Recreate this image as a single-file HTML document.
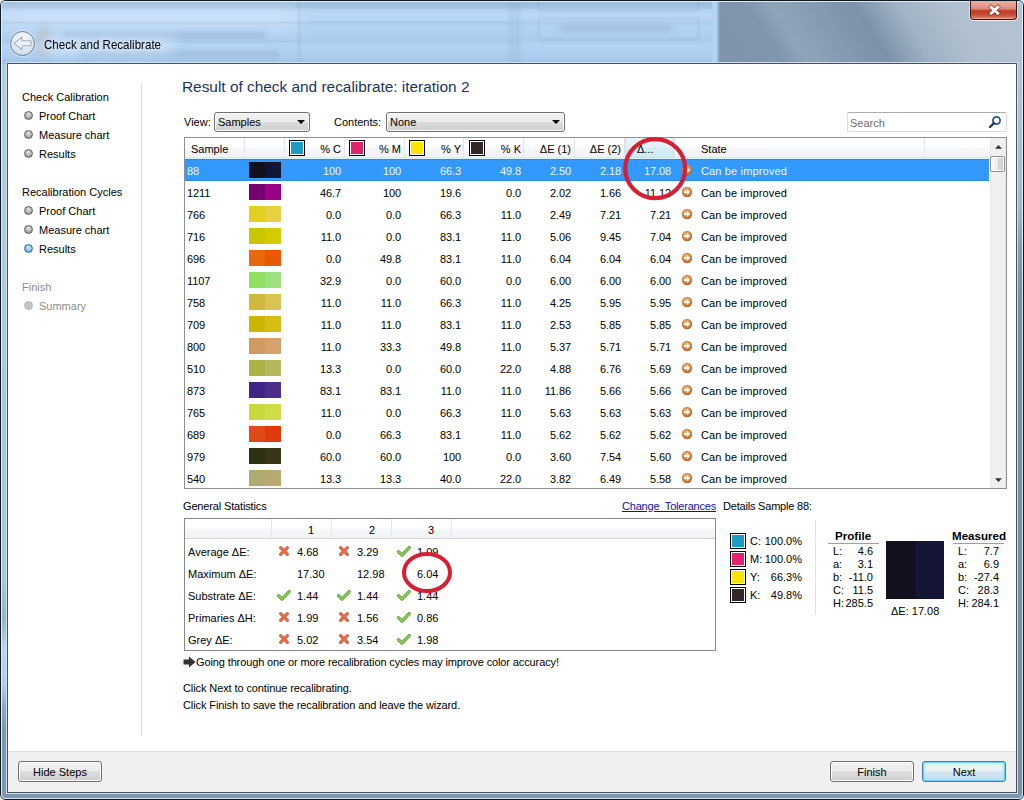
<!DOCTYPE html>
<html><head><meta charset="utf-8"><style>
*{box-sizing:border-box;margin:0;padding:0}
html,body{width:1024px;height:800px;overflow:hidden;background:#e6e6e6}
body{position:relative;font-family:"Liberation Sans",sans-serif;font-size:11px;color:#000}
.a{position:absolute}
.t{position:absolute;white-space:pre;line-height:13px}
.r{position:absolute;white-space:pre;line-height:13px;text-align:right}
.btn{position:absolute;height:21px;border:1px solid #707070;border-radius:3px;
 background:linear-gradient(#f2f2f2 0%,#ebebeb 50%,#dddddd 50%,#cfcfcf 100%);text-align:center;line-height:20px;font-size:11px;box-shadow:inset 0 0 0 1px #fcfcfc}
.btn.def{border-color:#3c7fb1;background:linear-gradient(#f0f4f8 0%,#eaf0f5 50%,#d6e6f1 50%,#c8def0 100%);box-shadow:inset 0 0 0 1px #6cd4fa, inset 0 0 3px 1px rgba(120,215,250,.7)}
.bul{position:absolute;width:9px;height:9px;border-radius:50%;background:radial-gradient(circle at 50% 32%,#e6e6e6 0,#b0b0b0 55%,#808080 100%);border:1px solid #606060}
.side{font-size:11px;line-height:13px}
.cmb{position:absolute;height:20px;border:1px solid #707070;border-radius:3px;background:linear-gradient(#f2f2f2 0%,#ebebeb 50%,#dddddd 50%,#cfcfcf 100%);box-shadow:inset 0 0 0 1px #fbfbfb}
.cmb span{position:absolute;left:3px;top:3px;font-size:11px;line-height:13px}
.cmb i{position:absolute;top:7px;width:0;height:0;border-left:4px solid transparent;border-right:4px solid transparent;border-top:4px solid #000}
.hsep{position:absolute;top:138px;width:1px;height:20px;background:#e3e5e7}
.hsw{position:absolute;top:140px;width:16px;height:16px;border:1px solid #000;box-shadow:inset 0 0 0 1px #fff}
.row{position:absolute;left:185px;width:804px;height:22px}
.sw{position:absolute;top:3px;left:64px;width:32px;height:16px}
.sw b{position:absolute;top:0;height:16px;width:16px}
.cell{position:absolute;top:6px;white-space:pre;line-height:13px;text-align:right;font-size:11px;letter-spacing:-0.1px}
.ico{position:absolute;left:497px;top:6px;width:11px;height:11px;border-radius:50%;background:radial-gradient(circle at 50% 45%,#f0b070 0,#d8904c 55%,#a86428 100%)}
.ico:after{content:"";position:absolute;left:2px;top:3px;width:0;height:0}
.st{position:absolute;left:516px;top:6px;white-space:pre;line-height:13px;font-size:11px;letter-spacing:0.15px}
.sel{background:#3399ff;color:#eef7ff;box-shadow:inset 0 1px 0 #2f8ae6,inset 0 -1px 0 #2f8ae6,0 -1px 0 #dcf4ff}
.xi{position:absolute;width:11px;height:11px}
.csw{position:absolute;width:16px;height:16px;border:1px solid #000;box-shadow:inset 0 0 0 1px #fff}
</style></head><body>
<div class="a" style="left:0;top:0;width:1024px;height:800px;border:1px solid #0e1820;border-radius:6px;overflow:hidden;background:#aec8e4"><div class="a" style="left:0;top:0;width:716px;height:63px;background:#b3d3f4"></div><div class="a" style="left:0;top:0;width:713px;height:63px;background:linear-gradient(180deg,rgba(80,110,140,.22) 0px,rgba(80,110,140,.18) 6px,rgba(255,255,255,.05) 10px,rgba(255,255,255,.08) 18px,rgba(60,100,140,.06) 22px,rgba(255,255,255,.0) 26px,rgba(60,100,140,.06) 40px,rgba(255,255,255,0) 44px,rgba(60,100,140,.05) 57px,rgba(40,80,120,.12) 61px)"></div><div class="a" style="left:716px;top:0;width:306px;height:63px;background:linear-gradient(58deg,#7f93ab 0px,#7f94ab 20px,#8096ad 57px,#8fa4b9 78px,#8599b0 116px,#7c92a9 148px,#a0b2c4 184px,#b0c0cf 226px,#b4c3d2 296px)"></div><div class="a" style="left:711px;top:0;width:8px;height:63px;background:linear-gradient(90deg,rgba(179,211,244,1) 0,rgba(179,211,244,.8) 60%,rgba(179,211,244,0) 100%)"></div><div class="a" style="left:0;top:6px;width:300px;height:22px;background:rgba(235,245,255,.35);filter:blur(8px)"></div><div class="a" style="left:297px;top:0;width:2px;height:63px;background:rgba(110,140,175,.16);filter:blur(1px)"></div><div class="a" style="left:0;top:21px;width:508px;height:1px;background:rgba(110,140,175,.09)"></div><div class="a" style="left:0;top:40px;width:508px;height:1px;background:rgba(110,140,175,.08)"></div><div class="a" style="left:0;top:57px;width:508px;height:1px;background:rgba(110,140,175,.07)"></div><div class="a" style="left:62px;top:31px;width:202px;height:6px;background:rgba(100,120,150,.20);filter:blur(2.5px)"></div><div class="a" style="left:78px;top:50px;width:200px;height:6px;background:rgba(100,120,150,.18);filter:blur(2.5px)"></div><div class="a" style="left:37px;top:27px;width:12px;height:28px;background:rgba(170,140,100,.25);filter:blur(3px)"></div><div class="a" style="left:508px;top:0;width:12px;height:63px;background:rgba(110,140,175,.10);filter:blur(2px)"></div><div class="a" style="left:537px;top:17px;width:161px;height:22px;border:1.5px solid rgba(120,140,165,.32);border-radius:2px;filter:blur(1.2px)"></div><div class="a" style="left:560px;top:24px;width:110px;height:6px;background:rgba(110,125,150,.22);filter:blur(2px)"></div><div class="a" style="left:537px;top:-8px;width:161px;height:18px;border:1.5px solid rgba(120,140,165,.32);border-radius:2px;filter:blur(1.2px)"></div><div class="a" style="left:35px;top:34px;width:140px;height:20px;background:rgba(225,238,252,.45);filter:blur(6px);border-radius:10px"></div><div class="a" style="left:0;top:63px;width:7px;height:737px;background:linear-gradient(180deg,#b0cbe8 0px,#aac4df 520px,#98b2ce 555px,#bcd4ee 585px,#b4cce6 620px,#8ea6c0 645px,#7d97b0 670px,#7d97b0 737px)"></div><div class="a" style="left:1016px;top:63px;width:7px;height:737px;background:linear-gradient(180deg,#b4c4d4 0px,#a6b8ca 140px,#8a9db0 185px,#7d8fa0 230px,#7d8fa0 737px)"></div><div class="a" style="left:0;top:792px;width:1022px;height:7px;background:#7d97b0"></div></div><div class="a" style="left:1px;top:1px;width:1022px;height:798px;border:1px solid rgba(235,245,255,.85);border-radius:5px"></div><div class="a" style="left:6px;top:62px;width:1012px;height:732px;border:1px solid rgba(215,230,245,.9)"></div><div class="a" style="left:10px;top:31px;width:25px;height:25px;border-radius:50%;border:1px solid #6f7f90;background:radial-gradient(circle at 50% 30%,rgba(250,252,255,.95) 0,rgba(228,236,245,.85) 55%,rgba(200,214,230,.8) 100%);box-shadow:0 0 0 1px rgba(240,248,255,.45)"></div><svg class="a" style="left:10px;top:31px" width="25" height="25" viewBox="0 0 25 25"><path d="M4.2 12.3 L12 5.8 L12 9.8 L21 9.8 L21 14.8 L12 14.8 L12 18.8 Z" fill="#eef3f8" stroke="#a2afbd" stroke-width="1.1" stroke-linejoin="round"/></svg><div class="t" style="left:44px;top:37px;font-size:13px;line-height:15px;color:#000;text-shadow:0 0 6px rgba(230,242,255,.9),0 0 10px rgba(230,242,255,.7);transform:scaleX(0.89);transform-origin:0 0">Check and Recalibrate</div><div class="a" style="left:970px;top:1px;width:47px;height:19px;border:1px solid #3c120c;border-top:none;border-radius:0 0 4px 4px;background:linear-gradient(#e9b0a4 0%,#e2988a 30%,#d98a78 46%,#c6432c 50%,#c2412a 68%,#cf5e48 85%,#e08c78 100%);box-shadow:0 1px 0 0 rgba(255,255,255,.75),-1px 0 0 0 rgba(255,255,255,.6),1px 0 0 0 rgba(255,255,255,.6), inset 0 -1px 1px rgba(255,200,180,.5)"></div><svg class="a" style="left:987px;top:3px" width="15" height="14" viewBox="0 0 15 14"><path d="M4.2 4.2 L10.8 10.2 M10.8 4.2 L4.2 10.2" stroke="#4a1410" stroke-width="4.4" fill="none" stroke-linecap="square" opacity=".55"/><path d="M4.2 4.2 L10.8 10.2 M10.8 4.2 L4.2 10.2" stroke="#fff" stroke-width="2.9" fill="none" stroke-linecap="square"/></svg><div class="a" style="left:7px;top:63px;width:1010px;height:730px;border:1px solid #45525e;background:#fff"></div><div class="a" style="left:141px;top:84px;width:1px;height:652px;background:#d9d9d9"></div><div class="a" style="left:8px;top:751px;width:1008px;height:41px;background:#f0f0f0;border-top:1px solid #dfdfdf"></div><div class="btn" style="left:18px;top:761px;width:84px">Hide Steps</div><div class="btn" style="left:830px;top:761px;width:84px">Finish</div><div class="btn def" style="left:922px;top:761px;width:84px">Next</div><div class="t side" style="left:22px;top:91px">Check Calibration</div><div class="bul" style="left:24px;top:111px"></div><div class="t side" style="left:39px;top:110px">Proof Chart</div><div class="bul" style="left:24px;top:130px"></div><div class="t side" style="left:39px;top:129px">Measure chart</div><div class="bul" style="left:24px;top:149px"></div><div class="t side" style="left:39px;top:148px">Results</div><div class="t side" style="left:22px;top:186px">Recalibration Cycles</div><div class="bul" style="left:24px;top:206px"></div><div class="t side" style="left:39px;top:205px">Proof Chart</div><div class="bul" style="left:24px;top:225px"></div><div class="t side" style="left:39px;top:224px">Measure chart</div><div class="bul" style="left:24px;top:244px;border-color:#3a6ea0;background:radial-gradient(circle at 50% 40%,#e8f4ff 0,#90c8f0 45%,#3a80c8 100%)"></div><div class="t side" style="left:39px;top:243px">Results</div><div class="t side" style="left:22px;top:281px;color:#8d8d8d">Finish</div><div class="bul" style="left:24px;top:301px;border-color:#b8b8b8;background:#c4c4c4"></div><div class="t side" style="left:39px;top:300px;color:#8d8d8d">Summary</div><div class="t" style="left:182px;top:78px;font-size:15.4px;line-height:17px;color:#1b3565">Result of check and recalibrate: iteration 2</div><div class="t" style="left:184px;top:116px;font-size:11px">View:</div><div class="cmb" style="left:214px;top:112px;width:96px"><span>Samples</span><i style="left:82px"></i></div><div class="t" style="left:334px;top:116px;font-size:11px">Contents:</div><div class="cmb" style="left:386px;top:112px;width:179px"><span>None</span><i style="left:165px"></i></div><div class="a" style="left:847px;top:112px;width:160px;height:20px;border:1px solid #d6d9dd;border-top-color:#abadb3;border-radius:2px;background:#fff"></div><div class="t" style="left:850px;top:117px;font-size:11px;color:#6d6d6d">Search</div><svg class="a" style="left:988px;top:115px" width="14" height="14" viewBox="0 0 14 14"><circle cx="8.5" cy="5.5" r="3.6" fill="none" stroke="#2a5a8c" stroke-width="1.8"/><path d="M6 8 L2 12" stroke="#1e3a5e" stroke-width="2.4" stroke-linecap="round"/></svg><div class="a" style="left:184px;top:137px;width:823px;height:352px;border:1px solid #8e8f8f;background:#fff"></div><div class="a" style="left:185px;top:138px;width:805px;height:20px;background:linear-gradient(#ffffff 0%,#ffffff 45%,#f6f7f8 55%,#f3f4f5 100%);border-bottom:1px solid #e6e6e6"></div><div class="a" style="left:625px;top:138px;width:49px;height:20px;background:linear-gradient(#e9f4fc 0%,#e4f1fb 45%,#d9ecf9 55%,#d3e8f7 100%);border:1px solid #c6e0f4;border-top:none"></div><div class="hsep" style="left:244px"></div><div class="hsep" style="left:284px"></div><div class="hsep" style="left:344px"></div><div class="hsep" style="left:404px"></div><div class="hsep" style="left:463px"></div><div class="hsep" style="left:523px"></div><div class="hsep" style="left:574px"></div><div class="hsep" style="left:624px"></div><div class="hsep" style="left:674px"></div><div class="hsep" style="left:924px"></div><div class="t" style="left:191px;top:143px">Sample</div><div class="r" style="left:281px;width:60px;top:143px">% C</div><div class="r" style="left:341px;width:60px;top:143px">% M</div><div class="r" style="left:401px;width:60px;top:143px">% Y</div><div class="r" style="left:461px;width:60px;top:143px">% K</div><div class="r" style="left:511px;width:60px;top:143px">ΔE (1)</div><div class="r" style="left:561px;width:60px;top:143px">ΔE (2)</div><div class="t" style="left:637px;top:143px">Δ...</div><div class="t" style="left:701px;top:143px">State</div><div class="hsw" style="left:289px;background:#1a9cc4"></div><div class="hsw" style="left:349px;background:#e0236e"></div><div class="hsw" style="left:409px;background:#ffe400"></div><div class="hsw" style="left:469px;background:#332828"></div><div class="row sel" style="top:159px"><div class="cell" style="left:2px;text-align:left">88</div><div class="sw"><b style="left:0;background:#13101d"></b><b style="left:16px;background:#121634"></b></div><div class="cell" style="left:96px;width:60px">100</div><div class="cell" style="left:156px;width:60px">100</div><div class="cell" style="left:216px;width:60px">66.3</div><div class="cell" style="left:276px;width:60px">49.8</div><div class="cell" style="left:326px;width:60px">2.50</div><div class="cell" style="left:376px;width:60px">2.18</div><div class="cell" style="left:426px;width:60px">17.08</div><svg class="a" style="left:496px;top:5px" width="12" height="12" viewBox="0 0 12 12"><defs><radialGradient id="og0" cx="45%" cy="40%" r="60%"><stop offset="0" stop-color="#f4c890"/><stop offset=".45" stop-color="#e29a56"/><stop offset="1" stop-color="#a8642a"/></radialGradient></defs><circle cx="6" cy="6" r="5.2" fill="url(#og0)"/><path d="M3 5 H6 V3.2 L9.2 6 L6 8.8 V7 H3 Z" fill="#fff"/></svg><div class="st">Can be improved</div></div><div class="row" style="top:181px"><div class="cell" style="left:2px;text-align:left">1211</div><div class="sw"><b style="left:0;background:#760070"></b><b style="left:16px;background:#9c0088"></b></div><div class="cell" style="left:96px;width:60px">46.7</div><div class="cell" style="left:156px;width:60px">100</div><div class="cell" style="left:216px;width:60px">19.6</div><div class="cell" style="left:276px;width:60px">0.0</div><div class="cell" style="left:326px;width:60px">2.02</div><div class="cell" style="left:376px;width:60px">1.66</div><div class="cell" style="left:426px;width:60px">11.12</div><svg class="a" style="left:496px;top:5px" width="12" height="12" viewBox="0 0 12 12"><defs><radialGradient id="og1" cx="45%" cy="40%" r="60%"><stop offset="0" stop-color="#f4c890"/><stop offset=".45" stop-color="#e29a56"/><stop offset="1" stop-color="#a8642a"/></radialGradient></defs><circle cx="6" cy="6" r="5.2" fill="url(#og1)"/><path d="M3 5 H6 V3.2 L9.2 6 L6 8.8 V7 H3 Z" fill="#fff"/></svg><div class="st">Can be improved</div></div><div class="row" style="top:203px"><div class="cell" style="left:2px;text-align:left">766</div><div class="sw"><b style="left:0;background:#e2d01e"></b><b style="left:16px;background:#e6d140"></b></div><div class="cell" style="left:96px;width:60px">0.0</div><div class="cell" style="left:156px;width:60px">0.0</div><div class="cell" style="left:216px;width:60px">66.3</div><div class="cell" style="left:276px;width:60px">11.0</div><div class="cell" style="left:326px;width:60px">2.49</div><div class="cell" style="left:376px;width:60px">7.21</div><div class="cell" style="left:426px;width:60px">7.21</div><svg class="a" style="left:496px;top:5px" width="12" height="12" viewBox="0 0 12 12"><defs><radialGradient id="og2" cx="45%" cy="40%" r="60%"><stop offset="0" stop-color="#f4c890"/><stop offset=".45" stop-color="#e29a56"/><stop offset="1" stop-color="#a8642a"/></radialGradient></defs><circle cx="6" cy="6" r="5.2" fill="url(#og2)"/><path d="M3 5 H6 V3.2 L9.2 6 L6 8.8 V7 H3 Z" fill="#fff"/></svg><div class="st">Can be improved</div></div><div class="row" style="top:225px"><div class="cell" style="left:2px;text-align:left">716</div><div class="sw"><b style="left:0;background:#c9c704"></b><b style="left:16px;background:#d4cc00"></b></div><div class="cell" style="left:96px;width:60px">11.0</div><div class="cell" style="left:156px;width:60px">0.0</div><div class="cell" style="left:216px;width:60px">83.1</div><div class="cell" style="left:276px;width:60px">11.0</div><div class="cell" style="left:326px;width:60px">5.06</div><div class="cell" style="left:376px;width:60px">9.45</div><div class="cell" style="left:426px;width:60px">7.04</div><svg class="a" style="left:496px;top:5px" width="12" height="12" viewBox="0 0 12 12"><defs><radialGradient id="og3" cx="45%" cy="40%" r="60%"><stop offset="0" stop-color="#f4c890"/><stop offset=".45" stop-color="#e29a56"/><stop offset="1" stop-color="#a8642a"/></radialGradient></defs><circle cx="6" cy="6" r="5.2" fill="url(#og3)"/><path d="M3 5 H6 V3.2 L9.2 6 L6 8.8 V7 H3 Z" fill="#fff"/></svg><div class="st">Can be improved</div></div><div class="row" style="top:247px"><div class="cell" style="left:2px;text-align:left">696</div><div class="sw"><b style="left:0;background:#e8680e"></b><b style="left:16px;background:#e85a00"></b></div><div class="cell" style="left:96px;width:60px">0.0</div><div class="cell" style="left:156px;width:60px">49.8</div><div class="cell" style="left:216px;width:60px">83.1</div><div class="cell" style="left:276px;width:60px">11.0</div><div class="cell" style="left:326px;width:60px">6.04</div><div class="cell" style="left:376px;width:60px">6.04</div><div class="cell" style="left:426px;width:60px">6.04</div><svg class="a" style="left:496px;top:5px" width="12" height="12" viewBox="0 0 12 12"><defs><radialGradient id="og4" cx="45%" cy="40%" r="60%"><stop offset="0" stop-color="#f4c890"/><stop offset=".45" stop-color="#e29a56"/><stop offset="1" stop-color="#a8642a"/></radialGradient></defs><circle cx="6" cy="6" r="5.2" fill="url(#og4)"/><path d="M3 5 H6 V3.2 L9.2 6 L6 8.8 V7 H3 Z" fill="#fff"/></svg><div class="st">Can be improved</div></div><div class="row" style="top:269px"><div class="cell" style="left:2px;text-align:left">1107</div><div class="sw"><b style="left:0;background:#8edf62"></b><b style="left:16px;background:#9be27c"></b></div><div class="cell" style="left:96px;width:60px">32.9</div><div class="cell" style="left:156px;width:60px">0.0</div><div class="cell" style="left:216px;width:60px">60.0</div><div class="cell" style="left:276px;width:60px">0.0</div><div class="cell" style="left:326px;width:60px">6.00</div><div class="cell" style="left:376px;width:60px">6.00</div><div class="cell" style="left:426px;width:60px">6.00</div><svg class="a" style="left:496px;top:5px" width="12" height="12" viewBox="0 0 12 12"><defs><radialGradient id="og5" cx="45%" cy="40%" r="60%"><stop offset="0" stop-color="#f4c890"/><stop offset=".45" stop-color="#e29a56"/><stop offset="1" stop-color="#a8642a"/></radialGradient></defs><circle cx="6" cy="6" r="5.2" fill="url(#og5)"/><path d="M3 5 H6 V3.2 L9.2 6 L6 8.8 V7 H3 Z" fill="#fff"/></svg><div class="st">Can be improved</div></div><div class="row" style="top:291px"><div class="cell" style="left:2px;text-align:left">758</div><div class="sw"><b style="left:0;background:#cfb93c"></b><b style="left:16px;background:#d9c456"></b></div><div class="cell" style="left:96px;width:60px">11.0</div><div class="cell" style="left:156px;width:60px">11.0</div><div class="cell" style="left:216px;width:60px">66.3</div><div class="cell" style="left:276px;width:60px">11.0</div><div class="cell" style="left:326px;width:60px">4.25</div><div class="cell" style="left:376px;width:60px">5.95</div><div class="cell" style="left:426px;width:60px">5.95</div><svg class="a" style="left:496px;top:5px" width="12" height="12" viewBox="0 0 12 12"><defs><radialGradient id="og6" cx="45%" cy="40%" r="60%"><stop offset="0" stop-color="#f4c890"/><stop offset=".45" stop-color="#e29a56"/><stop offset="1" stop-color="#a8642a"/></radialGradient></defs><circle cx="6" cy="6" r="5.2" fill="url(#og6)"/><path d="M3 5 H6 V3.2 L9.2 6 L6 8.8 V7 H3 Z" fill="#fff"/></svg><div class="st">Can be improved</div></div><div class="row" style="top:313px"><div class="cell" style="left:2px;text-align:left">709</div><div class="sw"><b style="left:0;background:#cdb600"></b><b style="left:16px;background:#d7be14"></b></div><div class="cell" style="left:96px;width:60px">11.0</div><div class="cell" style="left:156px;width:60px">11.0</div><div class="cell" style="left:216px;width:60px">83.1</div><div class="cell" style="left:276px;width:60px">11.0</div><div class="cell" style="left:326px;width:60px">2.53</div><div class="cell" style="left:376px;width:60px">5.85</div><div class="cell" style="left:426px;width:60px">5.85</div><svg class="a" style="left:496px;top:5px" width="12" height="12" viewBox="0 0 12 12"><defs><radialGradient id="og7" cx="45%" cy="40%" r="60%"><stop offset="0" stop-color="#f4c890"/><stop offset=".45" stop-color="#e29a56"/><stop offset="1" stop-color="#a8642a"/></radialGradient></defs><circle cx="6" cy="6" r="5.2" fill="url(#og7)"/><path d="M3 5 H6 V3.2 L9.2 6 L6 8.8 V7 H3 Z" fill="#fff"/></svg><div class="st">Can be improved</div></div><div class="row" style="top:335px"><div class="cell" style="left:2px;text-align:left">800</div><div class="sw"><b style="left:0;background:#d09a62"></b><b style="left:16px;background:#d8a06c"></b></div><div class="cell" style="left:96px;width:60px">11.0</div><div class="cell" style="left:156px;width:60px">33.3</div><div class="cell" style="left:216px;width:60px">49.8</div><div class="cell" style="left:276px;width:60px">11.0</div><div class="cell" style="left:326px;width:60px">5.37</div><div class="cell" style="left:376px;width:60px">5.71</div><div class="cell" style="left:426px;width:60px">5.71</div><svg class="a" style="left:496px;top:5px" width="12" height="12" viewBox="0 0 12 12"><defs><radialGradient id="og8" cx="45%" cy="40%" r="60%"><stop offset="0" stop-color="#f4c890"/><stop offset=".45" stop-color="#e29a56"/><stop offset="1" stop-color="#a8642a"/></radialGradient></defs><circle cx="6" cy="6" r="5.2" fill="url(#og8)"/><path d="M3 5 H6 V3.2 L9.2 6 L6 8.8 V7 H3 Z" fill="#fff"/></svg><div class="st">Can be improved</div></div><div class="row" style="top:357px"><div class="cell" style="left:2px;text-align:left">510</div><div class="sw"><b style="left:0;background:#adb243"></b><b style="left:16px;background:#b6b75c"></b></div><div class="cell" style="left:96px;width:60px">13.3</div><div class="cell" style="left:156px;width:60px">0.0</div><div class="cell" style="left:216px;width:60px">60.0</div><div class="cell" style="left:276px;width:60px">22.0</div><div class="cell" style="left:326px;width:60px">4.88</div><div class="cell" style="left:376px;width:60px">6.76</div><div class="cell" style="left:426px;width:60px">5.69</div><svg class="a" style="left:496px;top:5px" width="12" height="12" viewBox="0 0 12 12"><defs><radialGradient id="og9" cx="45%" cy="40%" r="60%"><stop offset="0" stop-color="#f4c890"/><stop offset=".45" stop-color="#e29a56"/><stop offset="1" stop-color="#a8642a"/></radialGradient></defs><circle cx="6" cy="6" r="5.2" fill="url(#og9)"/><path d="M3 5 H6 V3.2 L9.2 6 L6 8.8 V7 H3 Z" fill="#fff"/></svg><div class="st">Can be improved</div></div><div class="row" style="top:379px"><div class="cell" style="left:2px;text-align:left">873</div><div class="sw"><b style="left:0;background:#3f2586"></b><b style="left:16px;background:#4c2f88"></b></div><div class="cell" style="left:96px;width:60px">83.1</div><div class="cell" style="left:156px;width:60px">83.1</div><div class="cell" style="left:216px;width:60px">11.0</div><div class="cell" style="left:276px;width:60px">11.0</div><div class="cell" style="left:326px;width:60px">11.86</div><div class="cell" style="left:376px;width:60px">5.66</div><div class="cell" style="left:426px;width:60px">5.66</div><svg class="a" style="left:496px;top:5px" width="12" height="12" viewBox="0 0 12 12"><defs><radialGradient id="og10" cx="45%" cy="40%" r="60%"><stop offset="0" stop-color="#f4c890"/><stop offset=".45" stop-color="#e29a56"/><stop offset="1" stop-color="#a8642a"/></radialGradient></defs><circle cx="6" cy="6" r="5.2" fill="url(#og10)"/><path d="M3 5 H6 V3.2 L9.2 6 L6 8.8 V7 H3 Z" fill="#fff"/></svg><div class="st">Can be improved</div></div><div class="row" style="top:401px"><div class="cell" style="left:2px;text-align:left">765</div><div class="sw"><b style="left:0;background:#c9d83b"></b><b style="left:16px;background:#cddc48"></b></div><div class="cell" style="left:96px;width:60px">11.0</div><div class="cell" style="left:156px;width:60px">0.0</div><div class="cell" style="left:216px;width:60px">66.3</div><div class="cell" style="left:276px;width:60px">11.0</div><div class="cell" style="left:326px;width:60px">5.63</div><div class="cell" style="left:376px;width:60px">5.63</div><div class="cell" style="left:426px;width:60px">5.63</div><svg class="a" style="left:496px;top:5px" width="12" height="12" viewBox="0 0 12 12"><defs><radialGradient id="og11" cx="45%" cy="40%" r="60%"><stop offset="0" stop-color="#f4c890"/><stop offset=".45" stop-color="#e29a56"/><stop offset="1" stop-color="#a8642a"/></radialGradient></defs><circle cx="6" cy="6" r="5.2" fill="url(#og11)"/><path d="M3 5 H6 V3.2 L9.2 6 L6 8.8 V7 H3 Z" fill="#fff"/></svg><div class="st">Can be improved</div></div><div class="row" style="top:423px"><div class="cell" style="left:2px;text-align:left">689</div><div class="sw"><b style="left:0;background:#e04a18"></b><b style="left:16px;background:#e03a0c"></b></div><div class="cell" style="left:96px;width:60px">0.0</div><div class="cell" style="left:156px;width:60px">66.3</div><div class="cell" style="left:216px;width:60px">83.1</div><div class="cell" style="left:276px;width:60px">11.0</div><div class="cell" style="left:326px;width:60px">5.62</div><div class="cell" style="left:376px;width:60px">5.62</div><div class="cell" style="left:426px;width:60px">5.62</div><svg class="a" style="left:496px;top:5px" width="12" height="12" viewBox="0 0 12 12"><defs><radialGradient id="og12" cx="45%" cy="40%" r="60%"><stop offset="0" stop-color="#f4c890"/><stop offset=".45" stop-color="#e29a56"/><stop offset="1" stop-color="#a8642a"/></radialGradient></defs><circle cx="6" cy="6" r="5.2" fill="url(#og12)"/><path d="M3 5 H6 V3.2 L9.2 6 L6 8.8 V7 H3 Z" fill="#fff"/></svg><div class="st">Can be improved</div></div><div class="row" style="top:445px"><div class="cell" style="left:2px;text-align:left">979</div><div class="sw"><b style="left:0;background:#2d3112"></b><b style="left:16px;background:#383614"></b></div><div class="cell" style="left:96px;width:60px">60.0</div><div class="cell" style="left:156px;width:60px">60.0</div><div class="cell" style="left:216px;width:60px">100</div><div class="cell" style="left:276px;width:60px">0.0</div><div class="cell" style="left:326px;width:60px">3.60</div><div class="cell" style="left:376px;width:60px">7.54</div><div class="cell" style="left:426px;width:60px">5.60</div><svg class="a" style="left:496px;top:5px" width="12" height="12" viewBox="0 0 12 12"><defs><radialGradient id="og13" cx="45%" cy="40%" r="60%"><stop offset="0" stop-color="#f4c890"/><stop offset=".45" stop-color="#e29a56"/><stop offset="1" stop-color="#a8642a"/></radialGradient></defs><circle cx="6" cy="6" r="5.2" fill="url(#og13)"/><path d="M3 5 H6 V3.2 L9.2 6 L6 8.8 V7 H3 Z" fill="#fff"/></svg><div class="st">Can be improved</div></div><div class="row" style="top:467px"><div class="cell" style="left:2px;text-align:left">540</div><div class="sw"><b style="left:0;background:#afaa72"></b><b style="left:16px;background:#b8a872"></b></div><div class="cell" style="left:96px;width:60px">13.3</div><div class="cell" style="left:156px;width:60px">13.3</div><div class="cell" style="left:216px;width:60px">40.0</div><div class="cell" style="left:276px;width:60px">22.0</div><div class="cell" style="left:326px;width:60px">3.82</div><div class="cell" style="left:376px;width:60px">6.49</div><div class="cell" style="left:426px;width:60px">5.58</div><svg class="a" style="left:496px;top:5px" width="12" height="12" viewBox="0 0 12 12"><defs><radialGradient id="og14" cx="45%" cy="40%" r="60%"><stop offset="0" stop-color="#f4c890"/><stop offset=".45" stop-color="#e29a56"/><stop offset="1" stop-color="#a8642a"/></radialGradient></defs><circle cx="6" cy="6" r="5.2" fill="url(#og14)"/><path d="M3 5 H6 V3.2 L9.2 6 L6 8.8 V7 H3 Z" fill="#fff"/></svg><div class="st">Can be improved</div></div><div class="a" style="left:990px;top:138px;width:16px;height:350px;background:linear-gradient(90deg,#e8e8e8 0,#f0f0f0 2px,#f0f0f0 14px,#e8e8e8 16px)"></div><svg class="a" style="left:994px;top:143px" width="9" height="7" viewBox="0 0 9 7"><path d="M1 5.8 L4.5 2 L8 5.8 Z" fill="#303030"/></svg><svg class="a" style="left:994px;top:477px" width="9" height="7" viewBox="0 0 9 7"><path d="M1 1.2 L4.5 5 L8 1.2 Z" fill="#303030"/></svg><div class="a" style="left:990px;top:156px;width:15px;height:16px;border:1px solid #8e8f8f;border-radius:2px;background:linear-gradient(90deg,#f6f6f6 0%,#ececec 50%,#d9d9d9 51%,#cfcfcf 100%);box-shadow:inset 0 0 0 1px #fafafa"></div><svg class="a" style="left:620px;top:134px" width="70" height="70" viewBox="0 0 70 70"><ellipse cx="35.2" cy="34.6" rx="30" ry="29.5" fill="none" stroke="#d81e32" stroke-width="4.2"/></svg><div class="t" style="left:183px;top:500px;letter-spacing:-0.15px">General Statistics</div><a class="t" style="left:622px;top:500px;color:#1010a8;text-decoration:underline;letter-spacing:-0.2px">Change  Tolerances</a><div class="t" style="left:723px;top:500px;letter-spacing:-0.2px">Details Sample 88:</div><div class="a" style="left:184px;top:518px;width:532px;height:133px;border:1px solid #828790;background:#fff"></div><div class="a" style="left:185px;top:519px;width:530px;height:20px;background:linear-gradient(#ffffff 0%,#ffffff 45%,#f6f7f8 55%,#f2f3f4 100%);border-bottom:1px solid #d5d5d5"></div><div class="a" style="left:271px;top:519px;width:1px;height:20px;background:#e3e5e7"></div><div class="a" style="left:331px;top:519px;width:1px;height:20px;background:#e3e5e7"></div><div class="a" style="left:391px;top:519px;width:1px;height:20px;background:#e3e5e7"></div><div class="a" style="left:451px;top:519px;width:1px;height:20px;background:#e3e5e7"></div><div class="t" style="left:301px;width:20px;text-align:center;top:524px">1</div><div class="t" style="left:362px;width:20px;text-align:center;top:524px">2</div><div class="t" style="left:421px;width:20px;text-align:center;top:524px">3</div><div class="t" style="left:188px;top:546px">Average ΔE:</div><svg class="a" style="left:278px;top:545px" width="12" height="12" viewBox="0 0 12 12"><path d="M2.6 2.6 L9.4 9.4 M9.4 2.6 L2.6 9.4" stroke="#c04428" stroke-width="3.2" stroke-linecap="round" opacity=".85"/><path d="M2.6 2.6 L9.4 9.4 M9.4 2.6 L2.6 9.4" stroke="#ea6a48" stroke-width="2" stroke-linecap="round"/></svg><div class="t" style="left:297px;top:546px">4.68</div><svg class="a" style="left:338px;top:545px" width="12" height="12" viewBox="0 0 12 12"><path d="M2.6 2.6 L9.4 9.4 M9.4 2.6 L2.6 9.4" stroke="#c04428" stroke-width="3.2" stroke-linecap="round" opacity=".85"/><path d="M2.6 2.6 L9.4 9.4 M9.4 2.6 L2.6 9.4" stroke="#ea6a48" stroke-width="2" stroke-linecap="round"/></svg><div class="t" style="left:357px;top:546px">3.29</div><svg class="a" style="left:397px;top:546px" width="14" height="12" viewBox="0 0 14 12"><path d="M1.5 5.6 L5 9.1 L12.2 1.6" stroke="#5a9a2c" stroke-width="3.2" fill="none" stroke-linecap="round" stroke-linejoin="round"/><path d="M1.5 5.6 L5 9.1 L12.2 1.6" stroke="#8ccc58" stroke-width="1.9" fill="none" stroke-linecap="round" stroke-linejoin="round"/></svg><div class="t" style="left:417px;top:546px">1.09</div><div class="t" style="left:188px;top:568px">Maximum ΔE:</div><div class="t" style="left:297px;top:568px">17.30</div><div class="t" style="left:357px;top:568px">12.98</div><div class="t" style="left:417px;top:568px">6.04</div><div class="t" style="left:188px;top:590px">Substrate ΔE:</div><svg class="a" style="left:277px;top:590px" width="14" height="12" viewBox="0 0 14 12"><path d="M1.5 5.6 L5 9.1 L12.2 1.6" stroke="#5a9a2c" stroke-width="3.2" fill="none" stroke-linecap="round" stroke-linejoin="round"/><path d="M1.5 5.6 L5 9.1 L12.2 1.6" stroke="#8ccc58" stroke-width="1.9" fill="none" stroke-linecap="round" stroke-linejoin="round"/></svg><div class="t" style="left:297px;top:590px">1.44</div><svg class="a" style="left:337px;top:590px" width="14" height="12" viewBox="0 0 14 12"><path d="M1.5 5.6 L5 9.1 L12.2 1.6" stroke="#5a9a2c" stroke-width="3.2" fill="none" stroke-linecap="round" stroke-linejoin="round"/><path d="M1.5 5.6 L5 9.1 L12.2 1.6" stroke="#8ccc58" stroke-width="1.9" fill="none" stroke-linecap="round" stroke-linejoin="round"/></svg><div class="t" style="left:357px;top:590px">1.44</div><svg class="a" style="left:397px;top:590px" width="14" height="12" viewBox="0 0 14 12"><path d="M1.5 5.6 L5 9.1 L12.2 1.6" stroke="#5a9a2c" stroke-width="3.2" fill="none" stroke-linecap="round" stroke-linejoin="round"/><path d="M1.5 5.6 L5 9.1 L12.2 1.6" stroke="#8ccc58" stroke-width="1.9" fill="none" stroke-linecap="round" stroke-linejoin="round"/></svg><div class="t" style="left:417px;top:590px">1.44</div><div class="t" style="left:188px;top:612px">Primaries ΔH:</div><svg class="a" style="left:278px;top:611px" width="12" height="12" viewBox="0 0 12 12"><path d="M2.6 2.6 L9.4 9.4 M9.4 2.6 L2.6 9.4" stroke="#c04428" stroke-width="3.2" stroke-linecap="round" opacity=".85"/><path d="M2.6 2.6 L9.4 9.4 M9.4 2.6 L2.6 9.4" stroke="#ea6a48" stroke-width="2" stroke-linecap="round"/></svg><div class="t" style="left:297px;top:612px">1.99</div><svg class="a" style="left:338px;top:611px" width="12" height="12" viewBox="0 0 12 12"><path d="M2.6 2.6 L9.4 9.4 M9.4 2.6 L2.6 9.4" stroke="#c04428" stroke-width="3.2" stroke-linecap="round" opacity=".85"/><path d="M2.6 2.6 L9.4 9.4 M9.4 2.6 L2.6 9.4" stroke="#ea6a48" stroke-width="2" stroke-linecap="round"/></svg><div class="t" style="left:357px;top:612px">1.56</div><svg class="a" style="left:397px;top:612px" width="14" height="12" viewBox="0 0 14 12"><path d="M1.5 5.6 L5 9.1 L12.2 1.6" stroke="#5a9a2c" stroke-width="3.2" fill="none" stroke-linecap="round" stroke-linejoin="round"/><path d="M1.5 5.6 L5 9.1 L12.2 1.6" stroke="#8ccc58" stroke-width="1.9" fill="none" stroke-linecap="round" stroke-linejoin="round"/></svg><div class="t" style="left:417px;top:612px">0.86</div><div class="t" style="left:188px;top:634px">Grey ΔE:</div><svg class="a" style="left:278px;top:633px" width="12" height="12" viewBox="0 0 12 12"><path d="M2.6 2.6 L9.4 9.4 M9.4 2.6 L2.6 9.4" stroke="#c04428" stroke-width="3.2" stroke-linecap="round" opacity=".85"/><path d="M2.6 2.6 L9.4 9.4 M9.4 2.6 L2.6 9.4" stroke="#ea6a48" stroke-width="2" stroke-linecap="round"/></svg><div class="t" style="left:297px;top:634px">5.02</div><svg class="a" style="left:338px;top:633px" width="12" height="12" viewBox="0 0 12 12"><path d="M2.6 2.6 L9.4 9.4 M9.4 2.6 L2.6 9.4" stroke="#c04428" stroke-width="3.2" stroke-linecap="round" opacity=".85"/><path d="M2.6 2.6 L9.4 9.4 M9.4 2.6 L2.6 9.4" stroke="#ea6a48" stroke-width="2" stroke-linecap="round"/></svg><div class="t" style="left:357px;top:634px">3.54</div><svg class="a" style="left:397px;top:634px" width="14" height="12" viewBox="0 0 14 12"><path d="M1.5 5.6 L5 9.1 L12.2 1.6" stroke="#5a9a2c" stroke-width="3.2" fill="none" stroke-linecap="round" stroke-linejoin="round"/><path d="M1.5 5.6 L5 9.1 L12.2 1.6" stroke="#8ccc58" stroke-width="1.9" fill="none" stroke-linecap="round" stroke-linejoin="round"/></svg><div class="t" style="left:417px;top:634px">1.98</div><svg class="a" style="left:398px;top:549px" width="58" height="48" viewBox="0 0 58 48"><ellipse cx="29" cy="23.5" rx="23" ry="18.5" fill="none" stroke="#d81e32" stroke-width="4"/></svg><svg class="a" style="left:183px;top:656px" width="13" height="12" viewBox="0 0 13 12"><path d="M0.5 3.5 H6 V0.5 L12.5 6 L6 11.5 V8.5 H0.5 Z" fill="#333"/></svg><div class="t" style="left:196px;top:656px;letter-spacing:-0.12px">Going through one or more recalibration cycles may improve color accuracy!</div><div class="t" style="left:183px;top:682px;letter-spacing:-0.1px">Click Next to continue recalibrating.</div><div class="t" style="left:183px;top:699px;letter-spacing:-0.1px">Click Finish to save the recalibration and leave the wizard.</div><div class="csw" style="left:730px;top:533px;background:#1a9cc4"></div><div class="t" style="left:750px;top:535px">C:</div><div class="r" style="left:742px;width:60px;top:535px">100.0%</div><div class="csw" style="left:730px;top:551px;background:#e0236e"></div><div class="t" style="left:750px;top:553px">M:</div><div class="r" style="left:742px;width:60px;top:553px">100.0%</div><div class="csw" style="left:730px;top:569px;background:#ffe400"></div><div class="t" style="left:750px;top:571px">Y:</div><div class="r" style="left:742px;width:60px;top:571px">66.3%</div><div class="csw" style="left:730px;top:587px;background:#332828"></div><div class="t" style="left:750px;top:589px">K:</div><div class="r" style="left:742px;width:60px;top:589px">49.8%</div><div class="a" style="left:815px;top:520px;width:1px;height:95px;background:#e0e0e0"></div><div class="t" style="left:835px;top:529px;font-weight:bold;font-size:11.6px">Profile</div><div class="a" style="left:828px;top:543px;width:51px;height:1px;background:#a0a0a0"></div><div class="t" style="left:952px;top:529px;font-weight:bold;font-size:11.6px">Measured</div><div class="a" style="left:953px;top:543px;width:51px;height:1px;background:#a0a0a0"></div><div class="t" style="left:833px;top:545px">L:</div><div class="r" style="left:813px;width:60px;top:545px">4.6</div><div class="t" style="left:958px;top:545px">L:</div><div class="r" style="left:939px;width:60px;top:545px">7.7</div><div class="t" style="left:833px;top:558px">a:</div><div class="r" style="left:813px;width:60px;top:558px">3.1</div><div class="t" style="left:958px;top:558px">a:</div><div class="r" style="left:939px;width:60px;top:558px">6.9</div><div class="t" style="left:833px;top:571px">b:</div><div class="r" style="left:813px;width:60px;top:571px">-11.0</div><div class="t" style="left:958px;top:571px">b:</div><div class="r" style="left:939px;width:60px;top:571px">-27.4</div><div class="t" style="left:833px;top:584px">C:</div><div class="r" style="left:813px;width:60px;top:584px">11.5</div><div class="t" style="left:958px;top:584px">C:</div><div class="r" style="left:939px;width:60px;top:584px">28.3</div><div class="t" style="left:833px;top:597px">H:</div><div class="r" style="left:813px;width:60px;top:597px">285.5</div><div class="t" style="left:958px;top:597px">H:</div><div class="r" style="left:939px;width:60px;top:597px">284.1</div><div class="a" style="left:886px;top:541px;width:29px;height:58px;background:#130f1c"></div><div class="a" style="left:915px;top:541px;width:29px;height:58px;background:#121634"></div><div class="t" style="left:891px;top:605px">ΔE: 17.08</div></body></html>
